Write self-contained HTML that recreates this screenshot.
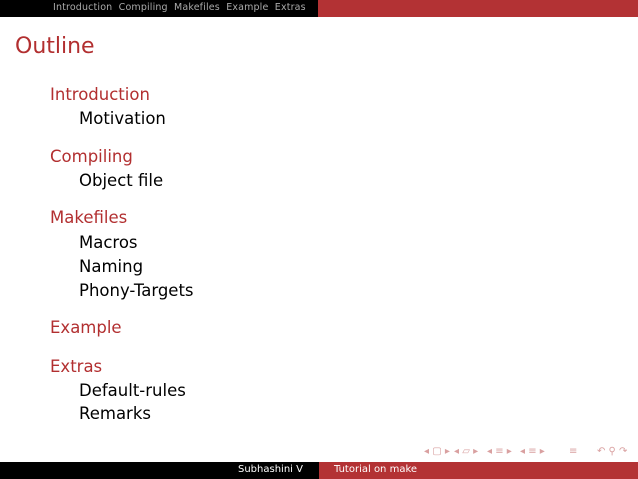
<html><head><style>
body{margin:0;width:638px;height:479px;position:relative;background:#fff;font-family:"DejaVu Sans","Liberation Sans",sans-serif;overflow:hidden}
.a{position:absolute;white-space:nowrap}
.s{color:#b22f30;font-size:16.5px;left:50px}
.b{color:#000;font-size:16.5px;left:79px}
.i{position:absolute;top:446px;font-size:10px;color:#d9a0a0}
</style></head><body>
<div class="a" style="left:0;top:0;width:318px;height:17px;background:#000"></div>
<div class="a" style="left:318px;top:0;width:320px;height:17px;background:#b33234"></div>
<div class="a" style="left:53px;top:2px;font-size:9.5px;color:#aaa;letter-spacing:0.15px">Introduction&nbsp; Compiling&nbsp; Makefiles&nbsp; Example&nbsp; Extras</div>
<div class="a" style="left:15px;top:34px;font-size:22px;color:#b22f30">Outline</div>
<div class="a s" style="top:85px">Introduction</div>
<div class="a b" style="top:109px">Motivation</div>
<div class="a s" style="top:147px">Compiling</div>
<div class="a b" style="top:171px">Object file</div>
<div class="a s" style="top:208px">Makefiles</div>
<div class="a b" style="top:233px">Macros</div>
<div class="a b" style="top:257px">Naming</div>
<div class="a b" style="top:281px">Phony-Targets</div>
<div class="a s" style="top:318px">Example</div>
<div class="a s" style="top:357px">Extras</div>
<div class="a b" style="top:381px">Default-rules</div>
<div class="a b" style="top:404px">Remarks</div>
<div class="i" style="left:424px">◂ ▢ ▸</div>
<div class="i" style="left:454px">◂ ▱ ▸</div>
<div class="i" style="left:487px">◂ ≡ ▸</div>
<div class="i" style="left:520px">◂ ≡ ▸</div>
<div class="i" style="left:569px">≡</div>
<div class="i" style="left:597px">↶ ⚲ ↷</div>
<div class="a" style="left:0;top:462px;width:319px;height:17px;background:#000"></div>
<div class="a" style="left:319px;top:462px;width:319px;height:17px;background:#b33234"></div>
<div class="a" style="left:238px;top:464px;font-size:10px;color:#fff">Subhashini V</div>
<div class="a" style="left:334px;top:464px;font-size:10px;color:#fff">Tutorial on make</div>
</body></html>
